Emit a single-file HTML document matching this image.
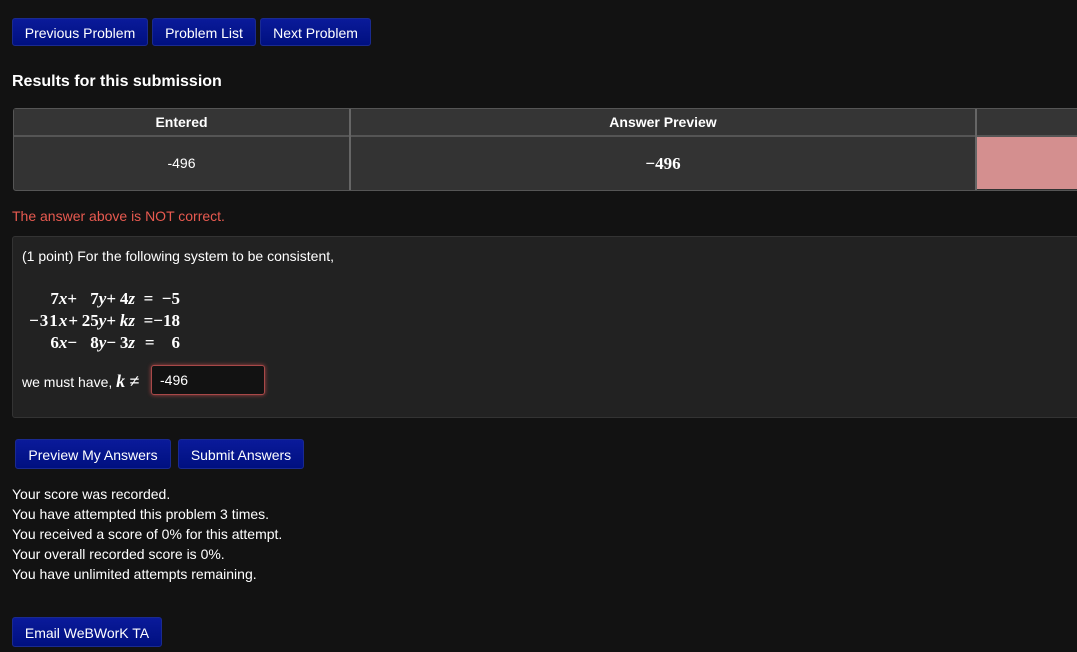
<!DOCTYPE html>
<html><head><meta charset="utf-8"><style>
body{margin:0;width:1077px;height:652px;background:#121212;color:#fff;font-family:"Liberation Sans",sans-serif;font-size:14px;position:relative;overflow:hidden}
.a{position:absolute;white-space:nowrap}
.btn{position:absolute;background:linear-gradient(#0a1a9a,#001080);color:#fff;border:1px solid #1a2a90;border-radius:3px;height:28px;line-height:28px;text-align:center;font-size:14px;box-sizing:border-box}
.m{font-family:"Liberation Serif","DejaVu Serif",serif;font-weight:bold;font-size:17px}
.m i{font-style:italic}
.r{position:absolute;text-align:right;white-space:nowrap}
</style></head><body>
<div class="btn" style="left:12px;top:18px;width:136px">Previous Problem</div>
<div class="btn" style="left:152px;top:18px;width:104px">Problem List</div>
<div class="btn" style="left:260px;top:18px;width:111px">Next Problem</div>
<div class="a" style="left:12px;top:73px;font-size:16px;font-weight:bold">Results for this submission</div>

<div class="a" style="left:13px;top:108px;width:1070px;height:83px;border:1px solid #555;border-radius:3px;box-sizing:border-box;background:#333"></div>
<div class="a" style="left:14px;top:109px;width:1063px;height:26px;background:#353535;border-bottom:2px solid #555"></div>
<div class="a" style="left:349px;top:109px;width:2px;height:81px;background:#666"></div>
<div class="a" style="left:975px;top:109px;width:2px;height:81px;background:#666"></div>
<div class="a" style="left:977px;top:137px;width:100px;height:52px;background:#d48f8f"></div>
<div class="a" style="left:14px;top:114px;width:335px;text-align:center;font-weight:bold">Entered</div>
<div class="a" style="left:351px;top:114px;width:624px;text-align:center;font-weight:bold">Answer Preview</div>
<div class="a" style="left:14px;top:155px;width:335px;text-align:center">-496</div>
<div class="a m" style="left:351px;top:154px;width:624px;text-align:center">−496</div>

<div class="a" style="left:12px;top:208px;color:#e85a50">The answer above is NOT correct.</div>

<div class="a" style="left:12px;top:236px;width:1080px;height:182px;background:#222;border:1px solid #333;border-radius:3px;box-sizing:border-box"></div>
<div class="a" style="left:22px;top:248px">(1 point) For the following system to be consistent,</div>
<div class="m">
<div class="r" style="right:1000px;top:289px">7<i>x</i>+</div>
<div class="r" style="right:961px;top:289px">7<i>y</i>+</div>
<div class="r" style="right:942px;top:289px">4<i>z</i></div>
<div class="r" style="right:897px;top:289px">= &nbsp;−5</div>
<div class="r" style="right:998px;top:311px;letter-spacing:1px">−31<i>x</i>+</div>
<div class="r" style="right:961px;top:311px">25<i>y</i>+</div>
<div class="r" style="right:942px;top:311px"><i>kz</i></div>
<div class="r" style="right:897px;top:311px">=−18</div>
<div class="r" style="right:1000px;top:333px">6<i>x</i>−</div>
<div class="r" style="right:961px;top:333px">8<i>y</i>−</div>
<div class="r" style="right:942px;top:333px">3<i>z</i></div>
<div class="r" style="right:897px;top:333px">= &nbsp;&nbsp;&nbsp;6</div>
</div>
<div class="a" style="left:22px;top:371px">we must have, <span class="m" style="font-size:18px"><i>k</i> ≠</span></div>
<div class="a" style="left:151px;top:365px;width:114px;height:30px;background:#121212;border:1px solid #a84848;border-radius:3px;box-sizing:border-box;box-shadow:0 0 4px #a44;padding:6px 0 0 8px">-496</div>

<div class="btn" style="left:15px;top:439px;width:156px;height:30px;line-height:30px">Preview My Answers</div>
<div class="btn" style="left:178px;top:439px;width:126px;height:30px;line-height:30px">Submit Answers</div>
<div class="a" style="left:12px;top:484px;line-height:20px">Your score was recorded.<br>You have attempted this problem 3 times.<br>You received a score of 0% for this attempt.<br>Your overall recorded score is 0%.<br>You have unlimited attempts remaining.</div>
<div class="btn" style="left:12px;top:617px;width:150px;height:30px;line-height:30px">Email WeBWorK TA</div>
</body></html>
